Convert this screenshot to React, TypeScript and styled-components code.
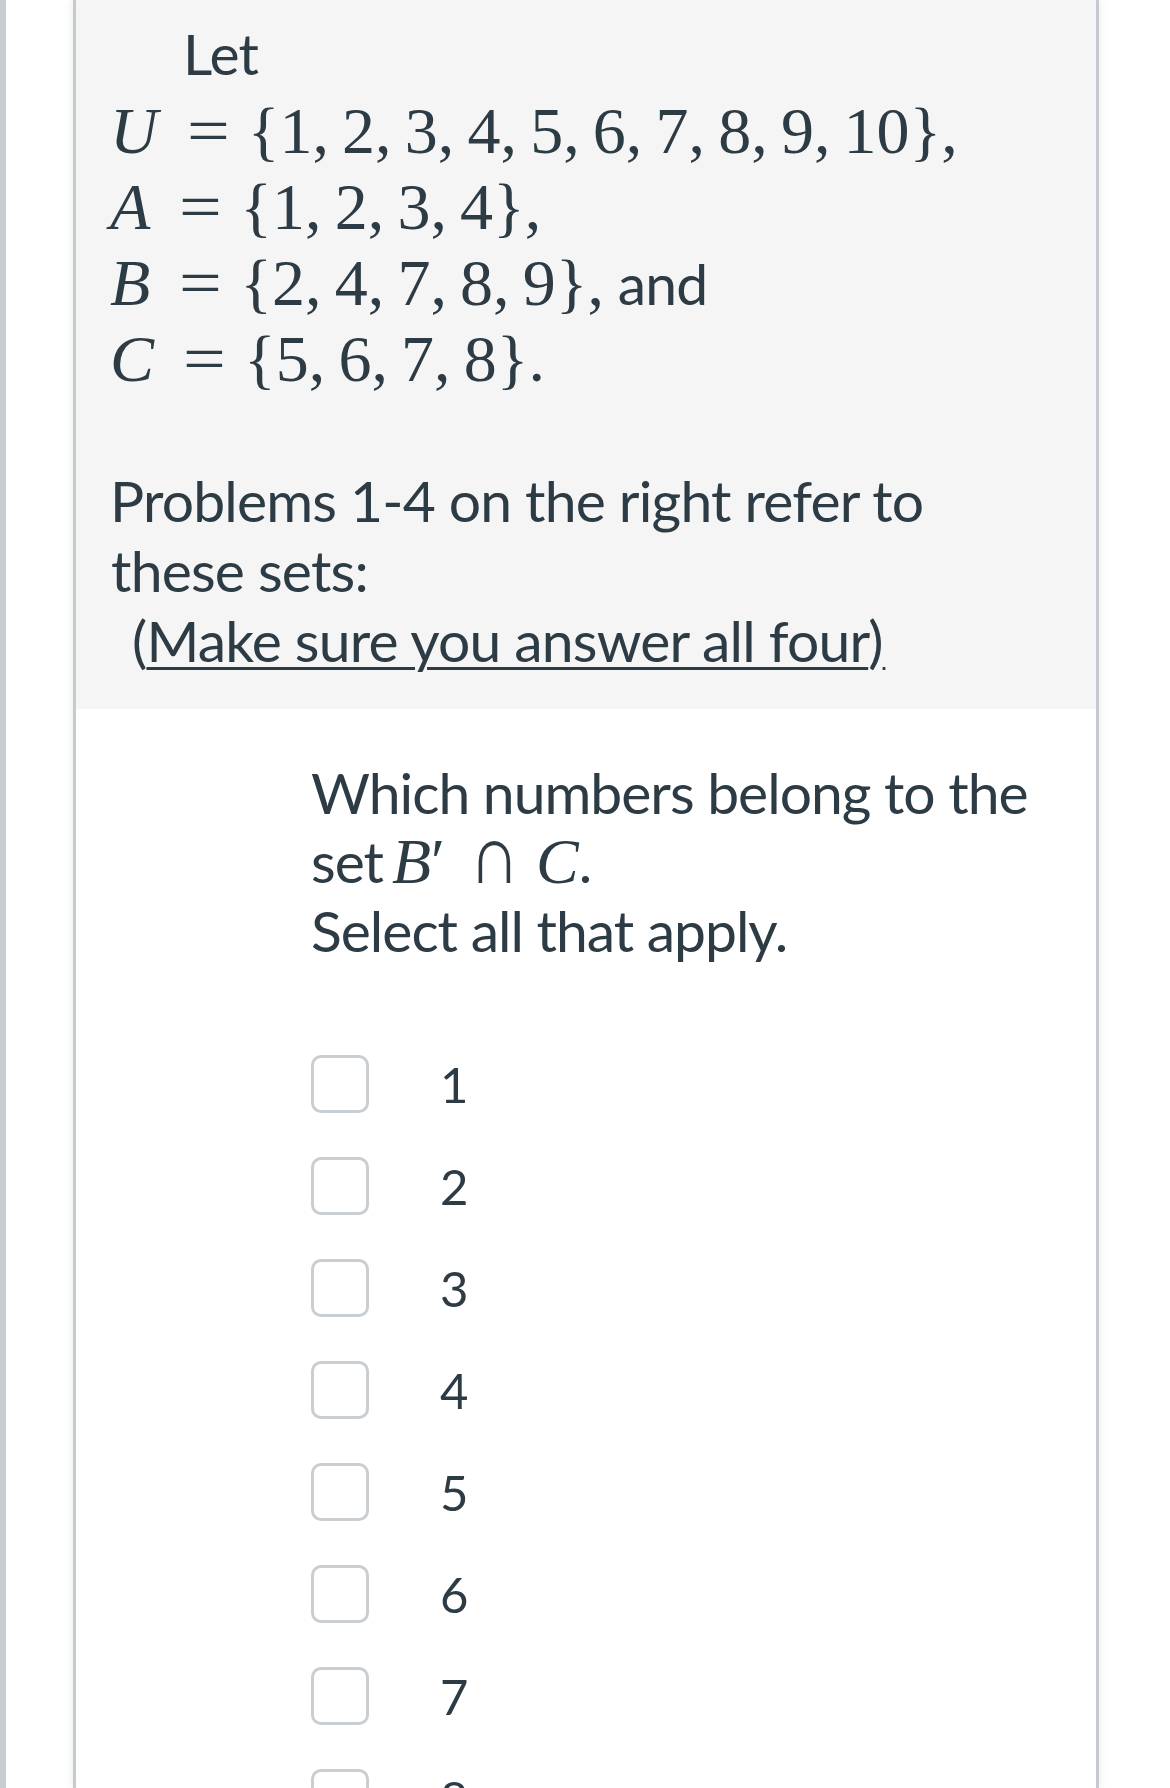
import React from 'react'
import styled, { createGlobalStyle } from 'styled-components'

const GlobalStyle = createGlobalStyle`
  html, body {
    margin: 0;
    padding: 0;
    background: #ffffff;
  }
  body {
    font-family: Lato, 'Noto Sans', sans-serif;
    color: #2d3b45;
  }
`

const Page = styled.div`
  display: flex;
  align-items: stretch;
  height: 1788px;
  overflow: hidden;
  background: #ffffff;
`

const SideRail = styled.div`
  flex: 0 0 6px;
  background: #c7cdd1;
`

const Card = styled.div`
  flex: 0 0 1026px;
  margin-left: 67px;
  box-sizing: border-box;
  border-left: 3px solid #c5cad0;
  border-right: 3px solid #c5cad0;
  box-shadow: 0 0 8px rgba(45, 59, 69, 0.12);
  background: #ffffff;
`

const StimulusPanel = styled.div`
  background: #f5f5f5;
  padding: 18px 36px 34px 34px;
`

const TextLine = styled.div<{ $indent?: number }>`
  font-size: 57px;
  line-height: 70px;
  letter-spacing: -0.8px;
  padding-left: ${({ $indent }) => $indent ?? 0}px;
  white-space: nowrap;
`

const MathBlock = styled.div`
  margin-top: 5px;
  font-family: 'Liberation Serif', 'Times New Roman', serif;
  font-size: 66px;
  line-height: 76px;
`

const MathRow = styled.div`
  white-space: nowrap;
`

const Var = styled.span`
  font-style: italic;
`

const Rel = styled.span`
  display: inline-block;
  margin: 0 0.36em 0 0.44em;
  transform: scaleX(1.15);
  transform-origin: left center;
`

const Sep = styled.span`
  margin-right: 0.2em;
`

const InlineText = styled.span`
  font-family: Lato, 'Noto Sans', sans-serif;
  font-size: 57px;
  letter-spacing: -0.8px;
`

const Prose = styled.div`
  margin-top: 68px;
`

const Underlined = styled.span`
  text-decoration: underline;
  text-decoration-thickness: 3px;
  text-underline-offset: 5px;
`

const QuestionBody = styled.div`
  padding: 49px 0 0 235px;
`

const QuestionText = styled.div`
  font-size: 57px;
  line-height: 69px;
  letter-spacing: -1px;
`

const InlineMath = styled.span`
  font-family: 'Liberation Serif', 'Times New Roman', serif;
  font-size: 64px;
  letter-spacing: 0;
  margin-left: 0.14em;
`

const Cap = styled.span`
  display: inline-block;
  margin: 0 0.3em 0 0.4em;
  transform: scale(1.1, 1.3);
  transform-origin: 50% 80%;
`

const OptionList = styled.div`
  margin-top: 68px;
  display: flex;
  flex-direction: column;
`

const OptionRow = styled.label`
  display: flex;
  align-items: center;
  height: 102px;
`

const Box = styled.span`
  flex: 0 0 58px;
  height: 58px;
  box-sizing: border-box;
  border: 3px solid #c9ced2;
  border-radius: 10px;
  background: #ffffff;
`

const OptionLabel = styled.span`
  margin-left: 71px;
  font-size: 49px;
  line-height: 58px;
`

const numbers = (list: string[]) =>
  list.map((n, i) => (
    <React.Fragment key={n}>
      {n}
      {i < list.length - 1 ? <Sep>,</Sep> : null}
    </React.Fragment>
  ))

const SetRow = ({ name, items, tail }: { name: string; items: string[]; tail: React.ReactNode }) => (
  <MathRow>
    <Var>{name}</Var>
    <Rel>=</Rel>
    {'{'}
    {numbers(items)}
    {'}'}
    {tail}
  </MathRow>
)

const options = ['1', '2', '3', '4', '5', '6', '7', '8', '9', '10']

export default function App() {
  return (
    <>
      <GlobalStyle />
      <Page>
        <SideRail />
        <Card>
          <StimulusPanel>
            <TextLine $indent={73}>Let</TextLine>
            <MathBlock>
              <SetRow name="U" items={['1', '2', '3', '4', '5', '6', '7', '8', '9', '10']} tail="," />
              <SetRow name="A" items={['1', '2', '3', '4']} tail="," />
              <SetRow
                name="B"
                items={['2', '4', '7', '8', '9']}
                tail={
                  <>
                    ,<InlineText> and</InlineText>
                  </>
                }
              />
              <SetRow name="C" items={['5', '6', '7', '8']} tail="." />
            </MathBlock>
            <Prose>
              <TextLine $indent={-2}>Problems 1-4 on the right refer to</TextLine>
              <TextLine $indent={1}>these sets:</TextLine>
              <TextLine $indent={22}>
                (<Underlined>Make sure you answer all four</Underlined>)<Underlined>{'\u200A'}</Underlined>
              </TextLine>
            </Prose>
          </StimulusPanel>
          <QuestionBody>
            <QuestionText>
              Which numbers belong to the
              <br />
              set
              <InlineMath>
                <Var>B</Var>′<Cap>∩</Cap>
                <Var>C</Var>
              </InlineMath>
              .
              <br />
              Select all that apply.
            </QuestionText>
            <OptionList>
              {options.map((o) => (
                <OptionRow key={o}>
                  <Box />
                  <OptionLabel>{o}</OptionLabel>
                </OptionRow>
              ))}
            </OptionList>
          </QuestionBody>
        </Card>
      </Page>
    </>
  )
}
